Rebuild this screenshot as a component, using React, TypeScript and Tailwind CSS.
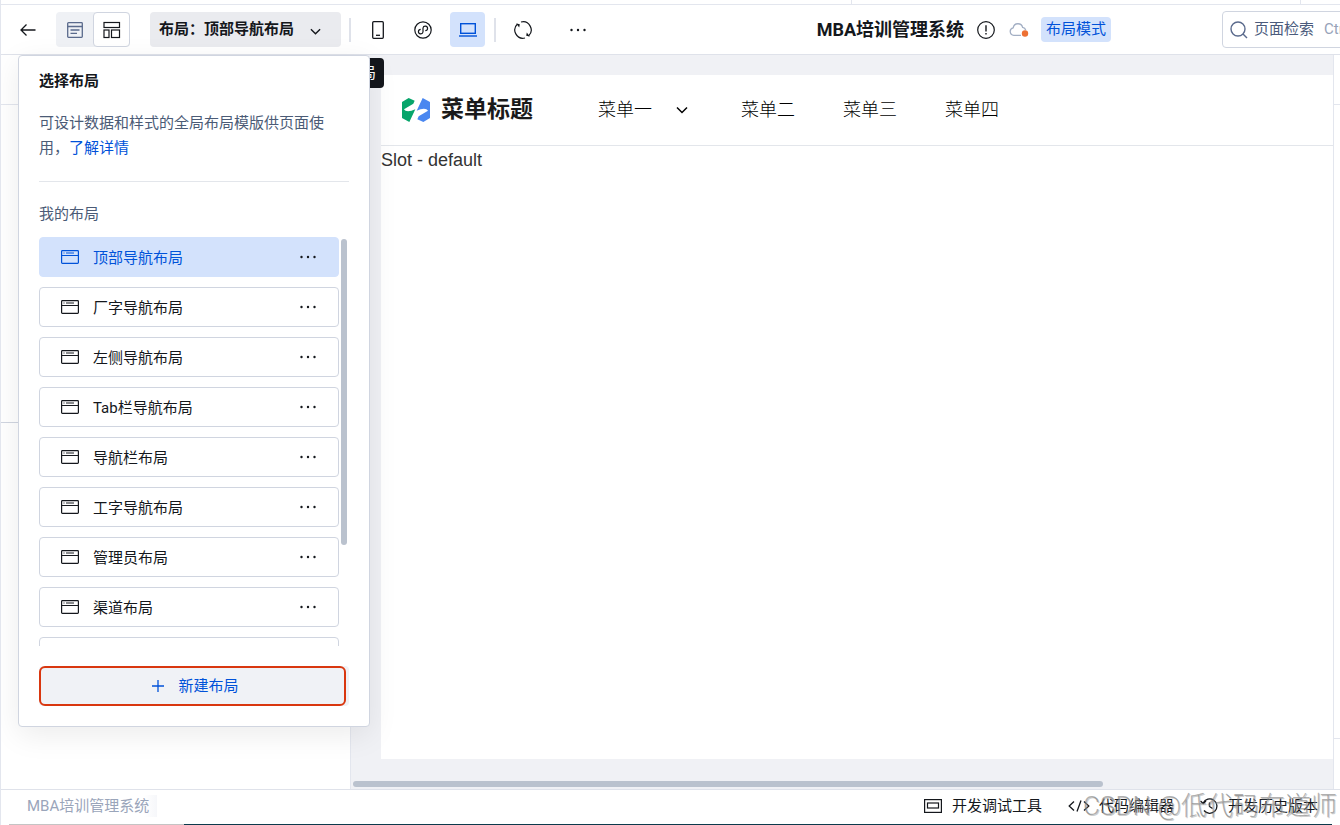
import React, { useState } from 'react';

interface LayoutItem {
  id: number;
  name: string;
}

const layouts: LayoutItem[] = [
  { id: 1, name: '顶部导航布局' },
  { id: 2, name: '厂字导航布局' },
  { id: 3, name: '左侧导航布局' },
  { id: 4, name: 'Tab栏导航布局' },
  { id: 5, name: '导航栏布局' },
  { id: 6, name: '工字导航布局' },
  { id: 7, name: '管理员布局' },
  { id: 8, name: '渠道布局' },
  { id: 9, name: '' },
];

const menus = ['菜单二', '菜单三', '菜单四'];

/* ---------- icons ---------- */

const BackIcon = () => (
  <svg className="h-4 w-4" viewBox="0 0 16 16" fill="none" stroke="currentColor" strokeWidth="1.3">
    <path d="M15.5 8H1M6.5 2.5L1 8l5.5 5.5" />
  </svg>
);

const PageIcon = () => (
  <svg className="h-4 w-4" viewBox="0 0 16 16" fill="none" stroke="currentColor" strokeWidth="1.3">
    <rect x="0.7" y="0.7" width="14.6" height="14.6" rx="0.8" />
    <path d="M0.7 4.5h14.6M3.5 8h9M3.5 11.3h6.5" />
  </svg>
);

const GridIcon = () => (
  <svg className="h-[18px] w-[18px]" viewBox="0 0 18 18" fill="none" stroke="currentColor" strokeWidth="1.2">
    <rect x="1" y="1.5" width="15.5" height="5" />
    <rect x="1" y="9" width="5" height="7.5" />
    <rect x="8.5" y="9" width="8" height="7.5" />
  </svg>
);

const ChevronIcon = ({ className }: { className: string }) => (
  <svg className={className} viewBox="0 0 12 12" fill="none" stroke="currentColor" strokeWidth="1.5">
    <path d="M1 3.5l5 5 5-5" />
  </svg>
);

const PhoneIcon = () => (
  <svg className="h-[18px] w-3" viewBox="0 0 12 18" fill="none" stroke="currentColor" strokeWidth="1.3">
    <rect x="0.7" y="0.7" width="10.6" height="16.6" rx="1" />
    <path d="M4 14.3h4" />
  </svg>
);

const MiniProgramIcon = () => (
  <svg className="h-[18px] w-[18px]" viewBox="0 0 18 18" fill="none" stroke="currentColor" strokeWidth="1.2">
    <circle cx="9" cy="9" r="8.2" />
    <path d="M6.7 8.3a2.3 2.3 0 1 0 2.3 2.7V7a2.3 2.3 0 1 1 2.3 2.7" />
  </svg>
);

const LaptopIcon = () => (
  <svg className="h-[14px] w-[18px]" viewBox="0 0 18 14" fill="none" stroke="currentColor" strokeWidth="1.4">
    <rect x="1.7" y="0.7" width="14.6" height="9.6" />
    <path d="M0 13h18" />
  </svg>
);

const RefreshIcon = () => (
  <svg className="h-[18px] w-[18px]" viewBox="0 0 18 18" fill="none" stroke="currentColor" strokeWidth="1.2">
    <path d="M3.5 3A8.2 8.2 0 0 0 11 17M14.5 15A8.2 8.2 0 0 0 7 1" />
    <path d="M2.2 2.6L5.8 3.2 5.2 6.6zM15.8 15.4L12.2 14.8 12.8 11.4z" fill="currentColor" stroke="none" />
  </svg>
);

const DotsIcon = () => (
  <svg className="h-1 w-4" viewBox="0 0 16 4" fill="currentColor">
    <circle cx="1.5" cy="2" r="1.2" />
    <circle cx="8" cy="2" r="1.2" />
    <circle cx="14.5" cy="2" r="1.2" />
  </svg>
);

const InfoIcon = () => (
  <svg className="h-[18px] w-[18px]" viewBox="0 0 18 18" fill="none" stroke="currentColor" strokeWidth="1.2">
    <circle cx="9" cy="9" r="8.3" />
    <path d="M9 4.3v6.2M9 12v1.6" strokeWidth="1.4" />
  </svg>
);

const CloudIcon = () => (
  <svg className="h-4 w-5" viewBox="0 0 20 16" fill="none">
    <path
      d="M12 13.3H4.8a3.8 3.8 0 0 1-.6-7.5 4.8 4.8 0 0 1 9.4-.4c1.6.3 2.7 1.2 3.1 2.6"
      stroke="#a3afc4"
      strokeWidth="1.3"
    />
    <circle cx="16" cy="11.5" r="3.2" fill="#ed7033" />
  </svg>
);

const SearchIcon = () => (
  <svg className="h-[18px] w-[18px] shrink-0" viewBox="0 0 18 18" fill="none" stroke="currentColor" strokeWidth="1.4">
    <circle cx="8" cy="8" r="7" />
    <path d="M13 13l4 4" />
  </svg>
);

const WindowIcon = () => (
  <svg className="h-[14px] w-[18px]" viewBox="0 0 18 14" fill="none" stroke="currentColor" strokeWidth="1.2">
    <rect x="0.6" y="0.6" width="16.8" height="12.8" rx="0.8" />
    <path d="M0.6 5.5h16.8M2.5 3h1M5 3h8" strokeWidth="1" />
  </svg>
);

const PlusIcon = () => (
  <svg className="h-3 w-3" viewBox="0 0 12 12" fill="none" stroke="currentColor" strokeWidth="1.3">
    <path d="M6 0v12M0 6h12" />
  </svg>
);

const DebugIcon = () => (
  <svg className="h-[14px] w-[18px]" viewBox="0 0 18 14" fill="none" stroke="currentColor" strokeWidth="1.2">
    <rect x="0.6" y="0.6" width="16.8" height="12.8" />
    <rect x="3.5" y="4" width="11" height="5" />
  </svg>
);

const CodeIcon = () => (
  <svg className="h-3 w-[22px]" viewBox="0 0 22 12" fill="none" stroke="currentColor" strokeWidth="1.3">
    <path d="M6 1.5L1.2 6 6 10.5M16 1.5L20.8 6 16 10.5M13 0.5L9 11.5" />
  </svg>
);

const HistoryIcon = () => (
  <svg className="h-4 w-[18px]" viewBox="0 0 18 16" fill="none" stroke="currentColor" strokeWidth="1.3">
    <path d="M3.2 5A7.2 7.2 0 1 1 4 12.5" />
    <path d="M0.5 3l2.7 2.5L6 3M9.5 4.5v4l3 2" />
  </svg>
);

const Logo = () => (
  <svg className="h-6 w-7" viewBox="0 0 84 72">
    <path d="M0 12L20 0L38 8L34 17L6 34C10 42 24 42 40 34L22 72L0 60Z" fill="#07a56b" />
    <path d="M84 60L64 72L46 64L50 55L78 38C74 30 60 30 44 38L62 0L84 12Z" fill="#4a87f0" />
  </svg>
);

/* ---------- sections ---------- */

const Header = ({ open, onToggle, current }: { open: boolean; onToggle: () => void; current: string }) => (
  <header className="flex h-[50px] shrink-0 items-center overflow-hidden border-b border-[#dfe2ea] bg-white">
    <div className="flex flex-1 items-center">
      <button aria-label="返回" className="ml-[19px] cursor-pointer">
        <BackIcon />
      </button>
      <div className="ml-5 flex h-[35px] w-[74px] rounded bg-[#eff1f5]">
        <button aria-label="页面" className="flex flex-1 items-center justify-center text-[#5a6a8c]">
          <PageIcon />
        </button>
        <button
          aria-label="布局"
          className="flex w-[37px] items-center justify-center rounded border border-[#d0d5e0] bg-white"
        >
          <GridIcon />
        </button>
      </div>
      <button
        aria-expanded={open}
        onClick={onToggle}
        className="ml-5 flex h-[35px] w-[191px] cursor-pointer items-center justify-between rounded bg-[#eaebef] pr-5 pl-[9px] text-[15px] font-bold"
      >
        {`布局\uff1a${current}`}
        <ChevronIcon className="mt-1 h-[11px] w-[11px]" />
      </button>
      <div className="ml-2 h-6 w-[2px] bg-[#dfe2ea]" />
      <button aria-label="手机" className="ml-[9px] flex h-[35px] w-[35px] items-center justify-center">
        <PhoneIcon />
      </button>
      <button aria-label="小程序" className="ml-[10px] flex h-[35px] w-[35px] items-center justify-center">
        <MiniProgramIcon />
      </button>
      <button
        aria-label="电脑"
        className="ml-[10px] flex h-[35px] w-[35px] items-center justify-center rounded bg-[#d3e2fc] text-[#0052d9]"
      >
        <LaptopIcon />
      </button>
      <div className="ml-[9px] h-6 w-[2px] bg-[#dfe2ea]" />
      <button aria-label="刷新" className="ml-[9px] flex h-[35px] w-[35px] items-center justify-center">
        <RefreshIcon />
      </button>
      <button aria-label="更多" className="ml-5 flex h-[35px] w-[35px] items-center justify-center">
        <DotsIcon />
      </button>
    </div>

    <div className="flex items-center">
      <h1 className="text-lg font-bold">MBA培训管理系统</h1>
      <span className="ml-[13px]">
        <InfoIcon />
      </span>
      <span className="ml-[14px]">
        <CloudIcon />
      </span>
      <span className="ml-3 rounded bg-[#d3e2fc] px-[5px] text-[15px] leading-[25px] text-[#0052d9]">布局模式</span>
    </div>

    <div className="ml-[111px] w-[118px] shrink-0 overflow-hidden">
      <label className="flex h-[37px] w-[160px] items-center rounded border border-[#d0d5e0] pl-[7px] text-[#5a6a8c]">
        <SearchIcon />
        <input
          type="text"
          aria-label="页面检索"
          placeholder="页面检索"
          className="ml-[6px] w-[70px] bg-transparent text-[15px] outline-none placeholder:text-[#4b5b7c]"
        />
        <kbd className="font-['Roboto',sans-serif] text-[15px] text-[#97a3b9]">Ctrl</kbd>
      </label>
    </div>
  </header>
);

interface LayoutPopoverProps {
  activeId: number;
  onSelect: (id: number) => void;
}

const LayoutPopover: React.FC<LayoutPopoverProps> = ({ activeId, onSelect }) => (
  <section className="absolute top-[55px] left-[17px] z-20 w-[352px] rounded border border-[#d0d5e0] bg-white px-5 pt-[13px] pb-5 text-[15px] shadow-[0_8px_30px_rgba(0,0,0,0.08)]">
    <h2 className="leading-6 font-bold">选择布局</h2>
    <p className="mt-[18px] pr-4 leading-[25px] text-[#4b5b76]">
      {'可设计数据和样式的全局布局模版供页面使用\uff0c'}
      <a href="#" className="text-[#0052d9]">
        了解详情
      </a>
    </p>
    <hr className="mt-5 border-[#e3e6eb]" />
    <h3 className="mt-5 leading-6 text-[#4b5b76]">我的布局</h3>

    <div className="mt-[11px] flex gap-[2px]">
      <ul className="flex h-[409px] w-[300px] flex-col gap-[10px] overflow-y-auto [scrollbar-width:none]">
        {layouts.map((item) => (
          <li
            key={item.id}
            className={`flex h-10 shrink-0 items-center rounded border pr-[22px] pl-[21px] ${
              item.id === activeId ? 'border-[#d3e2fc] bg-[#d3e2fc]' : 'border-[#d0d5e0] bg-white'
            }`}
          >
            <button
              onClick={() => onSelect(item.id)}
              className={`flex flex-1 cursor-pointer items-center gap-[14px] ${
                item.id === activeId ? 'text-[#0052d9]' : ''
              }`}
            >
              <WindowIcon />
              <span className="pt-[2px]">{item.name}</span>
            </button>
            <button aria-label="更多操作" className="cursor-pointer">
              <DotsIcon />
            </button>
          </li>
        ))}
      </ul>
      <div className="mt-[2px] h-[306px] w-[6px] rounded-full bg-[#bac2ce]" />
    </div>

    <div className="mt-5 rounded bg-[#f0f2f6] pr-[3px]">
      <button className="flex h-10 w-full cursor-pointer items-center justify-center gap-[14px] rounded-md border-2 border-[#d9370f] pl-[6px] text-[#0052d9]">
        <PlusIcon />
        新建布局
      </button>
    </div>
  </section>
);

const Canvas = () => (
  <main className="relative flex min-w-0 flex-1 flex-col bg-[#f0f1f5] pt-5">
    <div className="absolute top-[3px] left-[-37px] flex h-[30px] w-[70px] items-center justify-end rounded bg-[#14171c] pr-2 text-[15px] text-white">
      布局
    </div>
    <div className="ml-[30px] flex-1 bg-white">
      <nav className="flex h-[71px] items-center border-b border-[#e3e6eb] pl-[21px] text-lg font-light text-black">
        <Logo />
        <strong className="ml-[11px] text-[23px] font-bold text-[#1a1a1a]">菜单标题</strong>
        <button className="ml-[65px] flex cursor-pointer items-center gap-6">
          菜单一
          <ChevronIcon className="h-3 w-3" />
        </button>
        <div className="ml-[53px] flex gap-12">
          {menus.map((menu) => (
            <a key={menu} href="#">
              {menu}
            </a>
          ))}
        </div>
      </nav>
      <p className="font-['Liberation_Sans',sans-serif] text-lg text-[#333]">Slot - default</p>
    </div>
    <div className="flex h-[30px] items-end pb-[2px] pl-[2px]">
      <div className="h-[6px] w-[750px] rounded-full bg-[#bac2ce]" />
    </div>
  </main>
);

const Footer = () => (
  <footer className="relative flex h-[35px] shrink-0 items-center border-t border-[#dfe2ea] bg-white pr-[22px] pb-[2px] text-[15px]">
    <span className="ml-[26px] bg-linear-to-r from-white from-90% to-[#f6f7fa] pr-2 text-[#9aa5ba]">
      MBA培训管理系统
    </span>
    <div className="ml-auto flex items-center gap-[26px]">
      <button className="flex items-center gap-[10px]">
        <DebugIcon />
        开发调试工具
      </button>
      <button className="flex items-center gap-[9px]">
        <CodeIcon />
        代码编辑器
      </button>
      <button className="flex items-center gap-[10px]">
        <HistoryIcon />
        开发历史版本
      </button>
    </div>
    <span className="pointer-events-none absolute right-[3px] bottom-0 text-[26px] leading-9 font-light whitespace-nowrap text-[#7a7a7a]/60 [text-shadow:1px_1px_0_rgba(160,160,160,0.5)]">
      CSDN @低代码布道师
    </span>
  </footer>
);

export default function App() {
  const [open, setOpen] = useState(true);
  const [activeId, setActiveId] = useState(1);
  const current = layouts.find((item) => item.id === activeId)?.name ?? '';

  return (
    <div className="relative flex h-screen flex-col overflow-hidden border-l border-[#e3e6ee] bg-white font-['Roboto','Noto_Sans_CJK_SC',sans-serif] text-[#14171c]">
      {/* Edge of the browser tabs above the toolbar */}
      <div className="flex h-[5px] shrink-0 border-b border-[#e3e6ee]">
        <div className="w-[851px] border-r border-[#e3e6ee]" />
        <div className="w-[449px] border-r border-[#e3e6ee]" />
      </div>

      <Header open={open} onToggle={() => setOpen(!open)} current={current} />

      <div className="flex min-h-0 flex-1">
        <aside className="w-[350px] shrink-0 border-r border-[#e3e6ee]">
          <div className="h-[50px] border-b border-[#e3e6ee]" />
          <div className="h-[318px] border-b border-[#d0d5e0]" />
        </aside>
        <Canvas />
        <aside className="w-[7px] shrink-0 border-l border-[#e3e6ee]">
          <div className="h-[50px] border-b border-[#e3e6ee]" />
          <div className="h-[634px] border-b border-[#e3e6ee]" />
        </aside>
      </div>

      {open && <LayoutPopover activeId={activeId} onSelect={setActiveId} />}

      <Footer />

      {/* Window edge */}
      <div className="mr-2 ml-2 flex h-px shrink-0">
        <div className="w-[175px] bg-[#c4c4c4]" />
        <div className="flex-1 bg-[#0c3a4c]" />
      </div>
    </div>
  );
}
